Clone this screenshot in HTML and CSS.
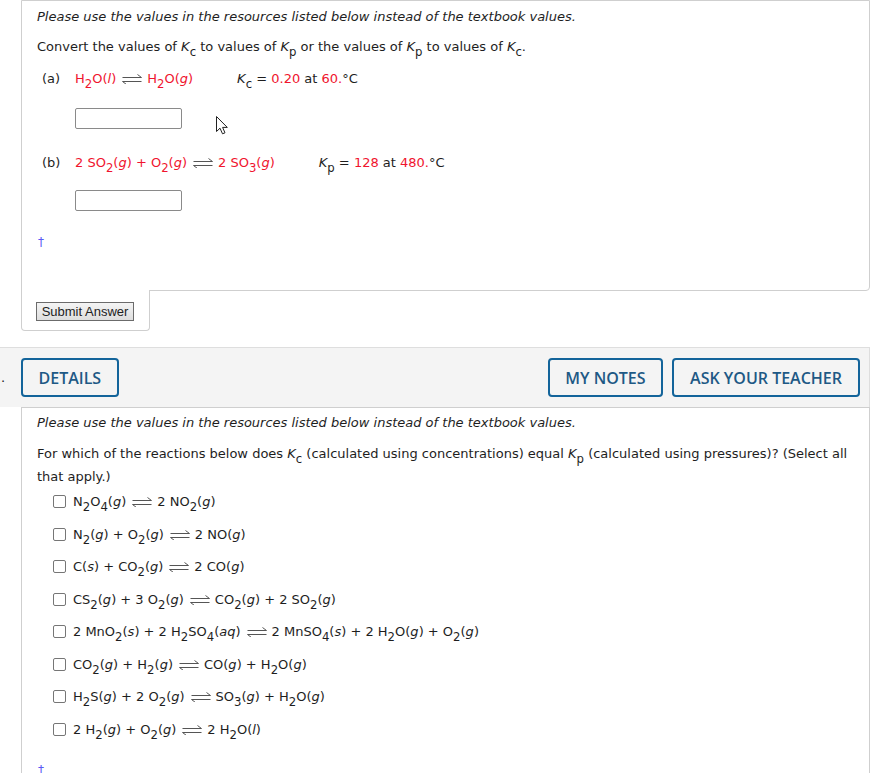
FILE: index.html
```html
<!DOCTYPE html>
<html>
<head>
<meta charset="utf-8">
<link rel="stylesheet" href="styles.css">
</head>
<body>
<div class="panel">
  <p class="note">Please use the values in the resources listed below instead of the textbook values.</p>
  <p class="prompt">Convert the values of <i>K</i><sub>c</sub> to values of <i>K</i><sub>p</sub> or the values of <i>K</i><sub>p</sub> to values of <i>K</i><sub>c</sub>.</p>
  <div class="part part-a">
    <span class="lbl">(a)</span>
    <span class="eq red">H<sub>2</sub>O(<i>l</i>)<svg class="arr" viewBox="0 0 20 10" width="20" height="10"><path d="M0.5 3.5H19.5L15.5 0.5M19.5 7.5H0.5L4.5 10.5" fill="none" stroke="#555" stroke-width="1"/></svg>H<sub>2</sub>O(<i>g</i>)</span>
    <span class="kval"><i>K</i><sub>c</sub> = <span class="red">0.20</span> at <span class="red">60.</span>°C</span>
  </div>
  <div class="answer answer-a"><input class="box" type="text"></div>
  <div class="part part-b">
    <span class="lbl">(b)</span>
    <span class="eq red">2 SO<sub>2</sub>(<i>g</i>) + O<sub>2</sub>(<i>g</i>)<svg class="arr" viewBox="0 0 20 10" width="20" height="10"><path d="M0.5 3.5H19.5L15.5 0.5M19.5 7.5H0.5L4.5 10.5" fill="none" stroke="#555" stroke-width="1"/></svg>2 SO<sub>3</sub>(<i>g</i>)</span>
    <span class="kval"><i>K</i><sub>p</sub> = <span class="red">128</span> at <span class="red">480.</span>°C</span>
  </div>
  <div class="answer answer-b"><input class="box" type="text"></div>
  <div class="dagger dagger-top">†</div>
  <svg class="cursor" viewBox="0 0 13 19" width="13" height="19"><path d="M0.5 0.5V15.5L4 12.2L6.5 17.8L9 16.8L6.6 11.4H11.3Z" fill="#fff" stroke="#222" stroke-width="1" stroke-linejoin="round"/></svg>
</div>
<div class="tab"><button class="submit" type="button">Submit Answer</button></div>

<div class="qhead">
  <span class="num">.</span>
  <button class="hbtn" type="button">DETAILS</button>
  <div class="hright">
    <button class="hbtn" type="button">MY NOTES</button>
    <button class="hbtn hbtn-wide" type="button">ASK YOUR TEACHER</button>
  </div>
</div>

<div class="panel2">
  <p class="note">Please use the values in the resources listed below instead of the textbook values.</p>
  <p class="prompt">For which of the reactions below does <i>K</i><sub>c</sub> (calculated using concentrations) equal <i>K</i><sub>p</sub> (calculated using pressures)? (Select all that apply.)</p>
  <ul class="choices">
    <li><input class="cb" type="checkbox"><span>N<sub>2</sub>O<sub>4</sub>(<i>g</i>)<svg class="arr" viewBox="0 0 20 10" width="20" height="10"><path d="M0.5 3.5H19.5L15.5 0.5M19.5 7.5H0.5L4.5 10.5" fill="none" stroke="#555" stroke-width="1"/></svg>2 NO<sub>2</sub>(<i>g</i>)</span></li>
    <li><input class="cb" type="checkbox"><span>N<sub>2</sub>(<i>g</i>) + O<sub>2</sub>(<i>g</i>)<svg class="arr" viewBox="0 0 20 10" width="20" height="10"><path d="M0.5 3.5H19.5L15.5 0.5M19.5 7.5H0.5L4.5 10.5" fill="none" stroke="#555" stroke-width="1"/></svg>2 NO(<i>g</i>)</span></li>
    <li><input class="cb" type="checkbox"><span>C(<i>s</i>) + CO<sub>2</sub>(<i>g</i>)<svg class="arr" viewBox="0 0 20 10" width="20" height="10"><path d="M0.5 3.5H19.5L15.5 0.5M19.5 7.5H0.5L4.5 10.5" fill="none" stroke="#555" stroke-width="1"/></svg>2 CO(<i>g</i>)</span></li>
    <li><input class="cb" type="checkbox"><span>CS<sub>2</sub>(<i>g</i>) + 3 O<sub>2</sub>(<i>g</i>)<svg class="arr" viewBox="0 0 20 10" width="20" height="10"><path d="M0.5 3.5H19.5L15.5 0.5M19.5 7.5H0.5L4.5 10.5" fill="none" stroke="#555" stroke-width="1"/></svg>CO<sub>2</sub>(<i>g</i>) + 2 SO<sub>2</sub>(<i>g</i>)</span></li>
    <li><input class="cb" type="checkbox"><span>2 MnO<sub>2</sub>(<i>s</i>) + 2 H<sub>2</sub>SO<sub>4</sub>(<i>aq</i>)<svg class="arr" viewBox="0 0 20 10" width="20" height="10"><path d="M0.5 3.5H19.5L15.5 0.5M19.5 7.5H0.5L4.5 10.5" fill="none" stroke="#555" stroke-width="1"/></svg>2 MnSO<sub>4</sub>(<i>s</i>) + 2 H<sub>2</sub>O(<i>g</i>) + O<sub>2</sub>(<i>g</i>)</span></li>
    <li><input class="cb" type="checkbox"><span>CO<sub>2</sub>(<i>g</i>) + H<sub>2</sub>(<i>g</i>)<svg class="arr" viewBox="0 0 20 10" width="20" height="10"><path d="M0.5 3.5H19.5L15.5 0.5M19.5 7.5H0.5L4.5 10.5" fill="none" stroke="#555" stroke-width="1"/></svg>CO(<i>g</i>) + H<sub>2</sub>O(<i>g</i>)</span></li>
    <li><input class="cb" type="checkbox"><span>H<sub>2</sub>S(<i>g</i>) + 2 O<sub>2</sub>(<i>g</i>)<svg class="arr" viewBox="0 0 20 10" width="20" height="10"><path d="M0.5 3.5H19.5L15.5 0.5M19.5 7.5H0.5L4.5 10.5" fill="none" stroke="#555" stroke-width="1"/></svg>SO<sub>3</sub>(<i>g</i>) + H<sub>2</sub>O(<i>g</i>)</span></li>
    <li><input class="cb" type="checkbox"><span>2 H<sub>2</sub>(<i>g</i>) + O<sub>2</sub>(<i>g</i>)<svg class="arr" viewBox="0 0 20 10" width="20" height="10"><path d="M0.5 3.5H19.5L15.5 0.5M19.5 7.5H0.5L4.5 10.5" fill="none" stroke="#555" stroke-width="1"/></svg>2 H<sub>2</sub>O(<i>l</i>)</span></li>
  </ul>
  <div class="dagger dagger-bottom">†</div>
</div>
</body>
</html>
```
FILE: styles.css
```css
html, body {
  margin: 0;
  padding: 0;
  background: #fff;
}
body {
  font-family: "DejaVu Sans", Verdana, sans-serif;
  font-size: 13px;
  color: #1e1e1e;
  overflow: hidden;
  height: 773px;
}
p { margin: 0; }
i { font-style: italic; }
sub {
  font-size: 0.9em;
  vertical-align: -5px;
  line-height: 0;
}
.red { color: #f0142e; }
.red i { color: #f0142e; }

.note {
  font-style: italic;
  line-height: 23px;
}
.prompt {
  line-height: 23px;
  margin-top: 7px;
}

.panel {
  position: relative;
  box-sizing: border-box;
  margin-left: 21px;
  width: 849px;
  height: 291px;
  border: 1px solid #cfcfcf;
  border-radius: 0 0 4px 0;
  padding: 4px 0 0 15px;
}
.part {
  display: flex;
  align-items: baseline;
  line-height: 23px;
  padding-left: 5px;
}
.part-a { margin-top: 9px; }
.part-b { margin-top: 22px; }
.lbl { width: 33px; }
.eq { white-space: nowrap; }
.kval { margin-left: 44px; white-space: nowrap; }
.arr {
  vertical-align: -1px;
  margin: 0 5px 0 6px;
}
.answer { padding-left: 38px; }
.answer-a { margin-top: 18px; }
.answer-b { margin-top: 16px; }
.box {
  display: block;
  box-sizing: border-box;
  width: 107px;
  height: 21px;
  margin: 0;
  border: 1px solid #8a8a8a;
  border-radius: 2px;
  background: #fff;
  padding: 0 3px;
}
.dagger {
  color: #5a5af5;
  font-size: 12px;
  line-height: 23px;
  padding-left: 1px;
}
.dagger-top { margin-top: 20px; }
.cursor {
  position: absolute;
  left: 194px;
  top: 115px;
}

.tab {
  position: relative;
  box-sizing: border-box;
  margin-left: 21px;
  margin-top: -1px;
  width: 129px;
  height: 41px;
  border: 1px solid #cfcfcf;
  border-top: none;
  border-radius: 0 0 4px 4px;
  background: #fff;
  padding: 12px 0 0 14px;
}
.submit {
  display: block;
  box-sizing: border-box;
  height: 19px;
  width: 98px;
  margin: 0;
  padding: 0;
  font-family: "Liberation Sans", Arial, sans-serif;
  font-size: 13px;
  line-height: 17px;
  color: #222;
  border: 1px solid #6b6b6b;
  border-radius: 0;
  background: linear-gradient(#f4f4f4, #dedede);
}

.qhead {
  box-sizing: border-box;
  margin-top: 16px;
  width: 870px;
  height: 60px;
  border-top: 1px solid #dedede;
  border-right: 1px solid #dedede;
  background: #f4f4f4;
  display: flex;
  align-items: center;
  padding-right: 9px;
}
.num {
  width: 21px;
  padding-left: 1px;
  box-sizing: border-box;
  font-size: 13px;
  color: #222;
}
.hright {
  margin-left: auto;
  display: flex;
  gap: 9px;
}
.hbtn {
  box-sizing: border-box;
  height: 39px;
  margin: 0;
  padding: 0 15.5px;
  border: 2px solid #13649a;
  border-radius: 4px;
  background: transparent;
  color: #1e5985;
  font-family: "Open Sans", sans-serif;
  font-weight: 600;
  font-size: 16px;
}
.hbtn-wide { padding: 0 16px; }

.panel2 {
  box-sizing: border-box;
  margin-left: 21px;
  width: 849px;
  height: 400px;
  border: 1px solid #cfcfcf;
  border-bottom: none;
  padding: 3px 0 0 15px;
}
.panel2 .prompt { margin-top: 8px; padding-right: 10px; }
.choices {
  list-style: none;
  margin: -2.5px 0 0 0;
  padding: 0 0 0 16px;
}
.choices li {
  height: 32.5px;
  display: flex;
  align-items: center;
  white-space: nowrap;
}
.cb {
  appearance: none;
  -webkit-appearance: none;
  box-sizing: border-box;
  width: 13px;
  height: 13px;
  margin: 0 7px 0 0;
  border: 1px solid #767676;
  border-radius: 2px;
  background: #fff;
  flex: none;
}
.dagger-bottom { margin-top: 13px; }
```
